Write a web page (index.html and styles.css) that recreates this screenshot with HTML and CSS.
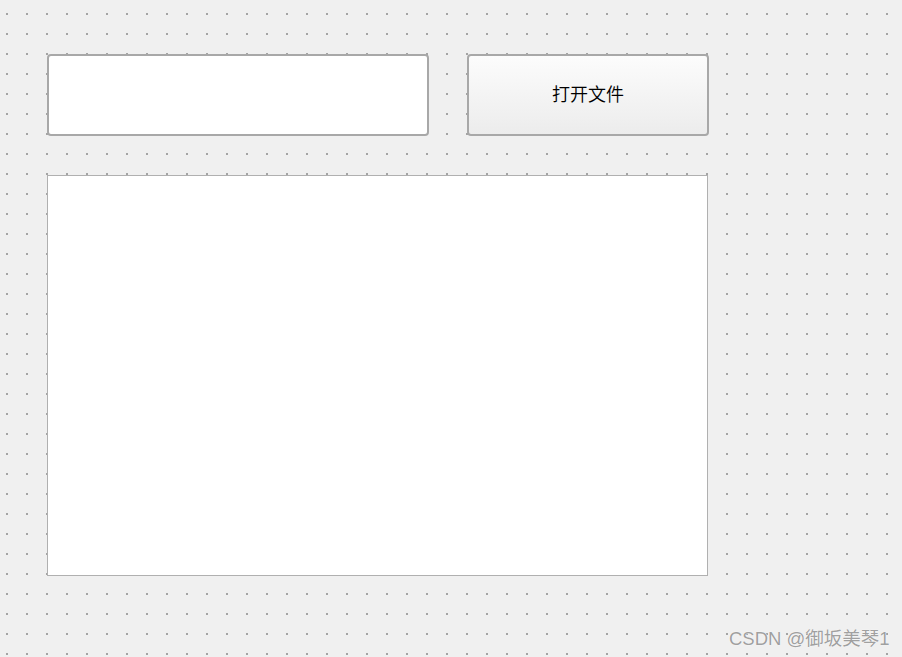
FILE: index.html
```html
<!DOCTYPE html>
<html lang="zh">
<head>
<meta charset="utf-8">
<title>Form</title>
<link rel="stylesheet" href="styles.css">
</head>
<body>
<div class="canvas">
  <div class="top-row">
    <div class="line-edit"></div>
    <button class="open-btn">打开文件</button>
  </div>
  <div class="text-area"></div>
  <div class="watermark">CSDN @御坂美琴1</div>
</div>
</body>
</html>
```
FILE: styles.css
```css
html, body {
  margin: 0;
  padding: 0;
}
body {
  width: 902px;
  height: 657px;
  overflow: hidden;
  background-color: #f0f0f0;
  background-image: conic-gradient(at 2px 2px, transparent 75%, #a4a4a4 0);
  background-size: 20px 20px;
  background-position: 6px 13px;
  font-family: "Noto Sans CJK SC", "Noto Sans", sans-serif;
}
.canvas {
  position: relative;
  width: 902px;
  height: 657px;
  box-sizing: border-box;
  padding: 54px 0 0 47px;
}
.top-row {
  display: flex;
  gap: 38px;
  height: 82px;
}
.line-edit {
  width: 382px;
  height: 82px;
  box-sizing: border-box;
  background: #ffffff;
  border: 2px solid #a8a8a8;
  border-radius: 4px;
}
.open-btn {
  width: 242px;
  height: 82px;
  box-sizing: border-box;
  border: 2px solid #a8a8a8;
  border-radius: 4px;
  background: linear-gradient(#fcfcfc, #ececec);
  font-family: "Noto Sans CJK SC", sans-serif;
  font-size: 18px;
  font-weight: 350;
  color: #000;
  padding: 0 0 4px 0;
  margin: 0;
}
.text-area {
  margin-top: 39px;
  width: 661px;
  height: 401px;
  box-sizing: border-box;
  background: #ffffff;
  border: 1px solid #b0b0b0;
}
.watermark {
  position: absolute;
  left: 729px;
  top: 624px;
  font-family: "Liberation Sans", "Noto Sans CJK SC", sans-serif;
  font-size: 18.5px;
  color: #a0a0a0;
  white-space: nowrap;
  text-shadow: 0 0 1px #fff, 0 0 1px #fff;
}
```
